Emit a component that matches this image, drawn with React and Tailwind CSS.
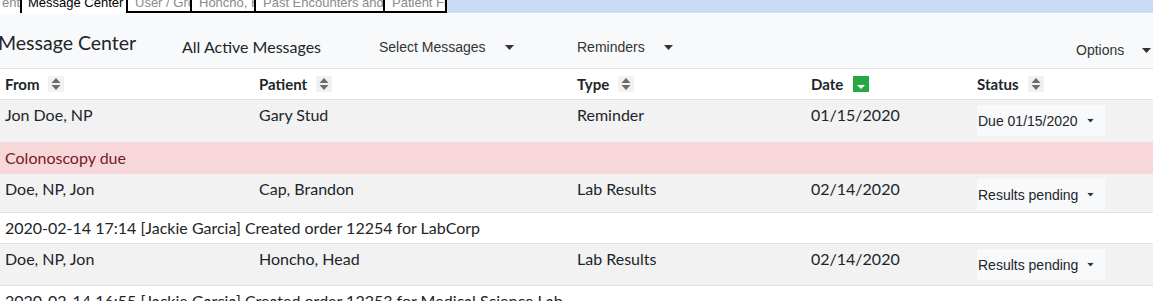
import React from 'react';

const lato = { fontFamily: 'Lato, "Open Sans", sans-serif' };
const arial = { fontFamily: '"Liberation Sans", Arial, sans-serif' };

const SortIcon = () => (
  <span className="inline-flex items-center justify-center w-[16px] h-[16px] bg-[#f1f1f1] ml-[9px]">
    <svg width="10" height="14" viewBox="0 0 10 14">
      <path d="M5 1 L9.5 6 L0.5 6 Z" fill="#6c6c6c" />
      <path d="M5 13 L9.5 8 L0.5 8 Z" fill="#6c6c6c" />
    </svg>
  </span>
);

const SortDown = () => (
  <span className="inline-flex items-center justify-center w-[16px] h-[16px] bg-[#28a745] ml-[10px]">
    <svg width="10" height="14" viewBox="0 0 10 14">
      <path d="M5 12 L9 8 L1 8 Z" fill="#ffffff" />
    </svg>
  </span>
);

const Caret = ({ className = '' }) => (
  <svg width="9" height="5" viewBox="0 0 9 5" className={className}>
    <path d="M0 0 L9 0 L4.5 5 Z" fill="#333" />
  </svg>
);

const cols = ['w-[254px]', 'w-[318px]', 'w-[234px]', 'w-[166px]', 'flex-1'];

const StatusSelect = ({ label }) => (
  <div className="inline-flex items-center h-[31px] w-[128px] bg-[#f8f9fa] pl-[1px] text-[14px] text-[#212529]" style={arial}>
    <span>{label}</span>
    <Caret className="ml-[8px] scale-75" />
  </div>
);

const rows = [
  { from: 'Jon Doe, NP', patient: 'Gary Stud', type: 'Reminder', date: '01/15/2020', status: 'Due 01/15/2020', note: 'Colonoscopy due', alert: true, h: 'h-[42px]', nh: 'h-[32px]' },
  { from: 'Doe, NP, Jon', patient: 'Cap, Brandon', type: 'Lab Results', date: '02/14/2020', status: 'Results pending', note: '2020-02-14 17:14 [Jackie Garcia] Created order 12254 for LabCorp', h: 'h-[39px]', nh: 'h-[31px]' },
  { from: 'Doe, NP, Jon', patient: 'Honcho, Head', type: 'Lab Results', date: '02/14/2020', status: 'Results pending', note: '2020-02-14 16:55 [Jackie Garcia] Created order 12253 for Medical Science Lab', h: 'h-[42px]', nh: 'h-[31px]' },
];

const tabs = [
  { label: 'ent', w: 'w-[22px]' },
  { label: 'Message Center', w: 'w-[106px]', active: true },
  { label: 'User / Gro', w: 'w-[64px]' },
  { label: 'Honcho, H', w: 'w-[64px]' },
  { label: 'Past Encounters and', w: 'w-[129px]' },
  { label: 'Patient Fl', w: 'w-[62px]' },
];

export default function App() {
  return (
    <div className="w-[1153px] h-[301px] overflow-hidden bg-white text-[#212529]">
      {/* tab strip */}
      <div className="flex h-[13px] bg-[#c9dcf3]" style={arial}>
        {tabs.map((t, i) => (
          <div
            key={i}
            className={`${t.w} h-[13px] overflow-hidden bg-white text-[13px] leading-[6px] whitespace-nowrap border-black border-r-2 ${i === 0 ? 'text-right text-[#888]' : ''} ${t.active ? 'text-black pl-[6px]' : ''} ${!t.active && i > 0 ? 'border-b-2 text-[#8a8a8a] pl-[7px]' : ''}`}
          >
            {t.label}
          </div>
        ))}
      </div>

      {/* toolbar */}
      <div className="mt-[1px] h-[55px] bg-[#f8f9fa] border-b border-[#dee2e6] flex items-start" style={lato}>
        <div className="w-[184px] pt-[17px] text-[19.5px] leading-[24px] -ml-[2px] whitespace-nowrap">Message Center</div>
        <div className="w-[197px] pt-[24px] text-[16px] leading-[18px] whitespace-nowrap">All Active Messages</div>
        <div className="w-[198px] pt-[25px] flex items-center text-[14px] leading-[16px] text-[#333]" style={arial}>
          <span>Select Messages</span>
          <Caret className="ml-[19px]" />
        </div>
        <div className="flex-1 pt-[25px] flex items-center text-[14px] leading-[16px] text-[#333]" style={arial}>
          <span>Reminders</span>
          <Caret className="ml-[19px]" />
        </div>
        <div className="w-[77px] pt-[28px] flex items-center text-[14px] leading-[16px] text-[#333]" style={arial}>
          <span>Options</span>
          <Caret className="ml-[18px]" />
        </div>
      </div>

      {/* table */}
      <div style={lato}>
        <div className="flex h-[31px] items-center font-bold text-[15px] border-b border-[#dee2e6]">
          <div className={`${cols[0]} pl-[5px] flex items-center`}>From<SortIcon /></div>
          <div className={`${cols[1]} pl-[5px] flex items-center`}>Patient<SortIcon /></div>
          <div className={`${cols[2]} pl-[5px] flex items-center`}>Type<SortIcon /></div>
          <div className={`${cols[3]} pl-[5px] flex items-center`}>Date<SortDown /></div>
          <div className={`${cols[4]} pl-[5px] flex items-center`}>Status<SortIcon /></div>
        </div>
        {rows.map((r, i) => (
          <React.Fragment key={i}>
            <div className={`flex ${r.h} bg-[#f2f2f2] text-[16px] leading-[20px] ${r.alert ? '' : 'border-b border-[#dee2e6]'}`}>
              <div className={`${cols[0]} pl-[5px] pt-[5px]`}>{r.from}</div>
              <div className={`${cols[1]} pl-[5px] pt-[5px]`}>{r.patient}</div>
              <div className={`${cols[2]} pl-[5px] pt-[5px]`}>{r.type}</div>
              <div className={`${cols[3]} pl-[5px] pt-[5px]`}>{r.date}</div>
              <div className={`${cols[4]} pl-[5px] pt-[5px]`}>
                <StatusSelect label={r.status} />
              </div>
            </div>
            <div className={`${r.nh} pl-[5px] flex items-center text-[16px] border-b border-[#dee2e6] ${r.alert ? 'bg-[#f8d7da] text-[#721c24] border-b-0' : 'bg-white'}`}>
              {r.note}
            </div>
          </React.Fragment>
        ))}
      </div>
    </div>
  );
}
